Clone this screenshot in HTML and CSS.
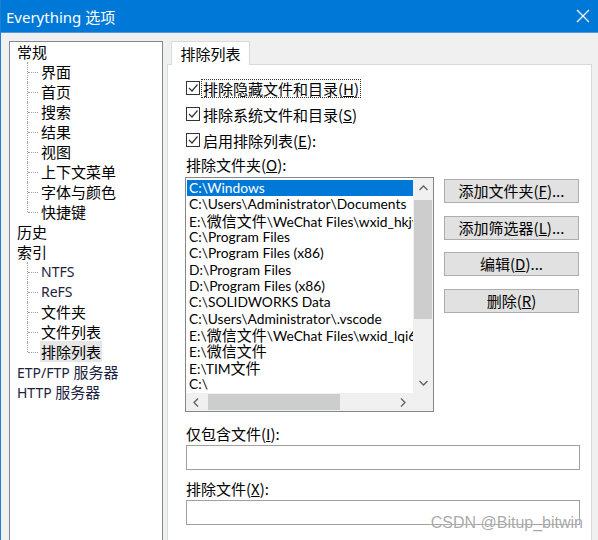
FILE: index.html
```html
<!DOCTYPE html>
<html lang="zh-CN">
<head>
  <meta charset="UTF-8" />
  <title>Everything 选项</title>
  <link rel="stylesheet" href="styles.css">
</head>
<body>
<div class="window">
  <div class="titlebar">
    <span class="title">Everything 选项</span>
    <svg class="close" width="14" height="14" viewBox="0 0 14 14">
      <path d="M1 1 L13 13 M13 1 L1 13" stroke="#fff" stroke-width="1.3" fill="none"/>
    </svg>
  </div>

  <div class="main">
    <div class="tree">
      <div class="row">常规</div>
      <div class="row child">界面</div>
      <div class="row child">首页</div>
      <div class="row child">搜索</div>
      <div class="row child">结果</div>
      <div class="row child">视图</div>
      <div class="row child">上下文菜单</div>
      <div class="row child">字体与颜色</div>
      <div class="row child last">快捷键</div>
      <div class="row">历史</div>
      <div class="row">索引</div>
      <div class="row child latin">NTFS</div>
      <div class="row child latin">ReFS</div>
      <div class="row child">文件夹</div>
      <div class="row child">文件列表</div>
      <div class="row child last"><span class="selected">排除列表</span></div>
      <div class="row latin">ETP/FTP <span class="cjk">服务器</span></div>
      <div class="row latin">HTTP <span class="cjk">服务器</span></div>
    </div>

    <div class="tabs">
      <div class="tab-head">
        <div class="tab">排除列表</div>
      </div>
      <div class="pane">
        <div class="check">
          <span class="box"><svg width="12" height="12" viewBox="0 0 12 12"><path d="M2 6 L5 9 L10.5 2.5" stroke="#333" stroke-width="1.2" fill="none"/></svg></span>
          <span class="check-label focus">排除隐藏文件和目录(<u>H</u>)</span>
        </div>
        <div class="check">
          <span class="box"><svg width="12" height="12" viewBox="0 0 12 12"><path d="M2 6 L5 9 L10.5 2.5" stroke="#333" stroke-width="1.2" fill="none"/></svg></span>
          <span class="check-label">排除系统文件和目录(<u>S</u>)</span>
        </div>
        <div class="check">
          <span class="box"><svg width="12" height="12" viewBox="0 0 12 12"><path d="M2 6 L5 9 L10.5 2.5" stroke="#333" stroke-width="1.2" fill="none"/></svg></span>
          <span class="check-label">启用排除列表(<u>E</u>):</span>
        </div>
        <div class="list-label">排除文件夹(<u>O</u>):</div>

        <div class="list-row">
          <div class="listbox">
            <div class="items">
              <div class="item active">C:\Windows</div>
              <div class="item">C:\Users\Administrator\Documents</div>
              <div class="item">E:\<span class="cjk">微信文件</span>\WeChat Files\wxid_hkjv</div>
              <div class="item">C:\Program Files</div>
              <div class="item">C:\Program Files (x86)</div>
              <div class="item">D:\Program Files</div>
              <div class="item">D:\Program Files (x86)</div>
              <div class="item">C:\SOLIDWORKS Data</div>
              <div class="item">C:\Users\Administrator\.vscode</div>
              <div class="item">E:\<span class="cjk">微信文件</span>\WeChat Files\wxid_lqi6</div>
              <div class="item">E:\<span class="cjk">微信文件</span></div>
              <div class="item">E:\TIM<span class="cjk">文件</span></div>
              <div class="item">C:\</div>
            </div>
            <div class="vscroll">
              <div class="arrow"><svg width="9" height="6" viewBox="0 0 9 6"><path d="M0.5 5 L4.5 1 L8.5 5" stroke="#606060" stroke-width="1.3" fill="none"/></svg></div>
              <div class="track"><div class="thumb-v"></div></div>
              <div class="arrow"><svg width="9" height="6" viewBox="0 0 9 6"><path d="M0.5 1 L4.5 5 L8.5 1" stroke="#606060" stroke-width="1.3" fill="none"/></svg></div>
            </div>
            <div class="hscroll">
              <div class="arrow"><svg width="6" height="9" viewBox="0 0 6 9"><path d="M5 0.5 L1 4.5 L5 8.5" stroke="#606060" stroke-width="1.3" fill="none"/></svg></div>
              <div class="track"><div class="thumb-h"></div></div>
              <div class="arrow"><svg width="6" height="9" viewBox="0 0 6 9"><path d="M1 0.5 L5 4.5 L1 8.5" stroke="#606060" stroke-width="1.3" fill="none"/></svg></div>
            </div>
            <div class="corner"></div>
          </div>

          <div class="buttons">
            <div class="btn">添加文件夹(<u>F</u>)...</div>
            <div class="btn">添加筛选器(<u>L</u>)...</div>
            <div class="btn">编辑(<u>D</u>)...</div>
            <div class="btn">删除(<u>R</u>)</div>
          </div>
        </div>

        <div class="field-label">仅包含文件(<u>I</u>):</div>
        <div class="input"></div>
        <div class="field-label second">排除文件(<u>X</u>):</div>
        <div class="input"></div>
      </div>
    </div>
  </div>

  <div class="watermark">CSDN @Bitup_bitwin</div>
</div>
</body>
</html>
```

FILE: styles.css
```css
body {
  margin: 0;
  font-family: "Noto Sans CJK SC", sans-serif;
  font-size: 15px;
  color: #000;
  background: #f0f0f0;
}
.window {
  position: relative;
  width: 598px;
  height: 540px;
  overflow: hidden;
  box-sizing: border-box;
  border-left: 1px solid #1a7fd6;
  background: #f0f0f0;
}
.titlebar {
  height: 32px;
  background: #0078d7;
  color: #fff;
  display: flex;
  align-items: center;
  justify-content: space-between;
  padding: 0 8px 0 5px;
  border-bottom: 1px solid #4c9be0;
}
.title {
  font-family: "Noto Sans", "Noto Sans CJK SC", sans-serif;
  font-size: 15px;
}
.cjk {
  font-family: "Noto Sans CJK SC", sans-serif;
  font-size: 15px;
}

.main {
  display: flex;
  gap: 4px;
  padding: 8px 0 0 8px;
}
.tree {
  width: 154px;
  height: 520px;
  box-sizing: border-box;
  border: 1px solid #828790;
  background: #fff;
}
.row {
  position: relative;
  height: 20px;
  line-height: 20px;
  padding-left: 7px;
  white-space: nowrap;
}
.row.latin {
  font-family: "Noto Sans", "Noto Sans CJK SC", sans-serif;
  font-size: 14px;
  color: #1c2340;
}
.row.child {
  padding-left: 31px;
}
.row.child::before {
  content: "";
  position: absolute;
  left: 17px;
  top: 0;
  bottom: 0;
  border-left: 1px dotted #a0a0a0;
}
.row.child.last::before {
  bottom: 10px;
}
.row.child::after {
  content: "";
  position: absolute;
  left: 18px;
  top: 10px;
  width: 10px;
  border-top: 1px dotted #a0a0a0;
}
.selected {
  background: #e6e6e6;
  padding: 0 1px;
  margin-left: -1px;
}

.tabs {
  width: 425px;
  display: flex;
  flex-direction: column;
}
.tab-head {
  display: flex;
  padding-left: 4px;
}
.tab {
  position: relative;
  z-index: 1;
  width: 79px;
  height: 24px;
  box-sizing: border-box;
  border: 1px solid #d9d9d9;
  border-bottom: none;
  background: #fff;
  text-align: center;
  line-height: 23px;
  margin-bottom: -1px;
}
.pane {
  height: 500px;
  box-sizing: border-box;
  border: 1px solid #d9d9d9;
  background: #fff;
  padding: 10px 10px 0 17px;
}

.check {
  display: flex;
  align-items: center;
  height: 26px;
}
.box {
  width: 14px;
  height: 14px;
  box-sizing: border-box;
  border: 1px solid #333;
  background: #fff;
  margin: 0 1px 0 1px;
  display: flex;
  align-items: center;
  justify-content: center;
}
.check-label {
  border: 1px dotted transparent;
  padding: 0 1px;
  line-height: 17px;
}
.check-label.focus {
  border-color: #333;
}
.list-label {
  height: 24px;
  line-height: 24px;
  padding-left: 1px;
}

.list-row {
  display: flex;
}
.listbox {
  width: 249px;
  height: 235px;
  box-sizing: border-box;
  border: 1px solid #828790;
  background: #fff;
  display: grid;
  grid-template-columns: 1fr 20px;
  grid-template-rows: 1fr 18px;
  font-family: Lato, "Noto Sans CJK SC", sans-serif;
  font-size: 13.8px;
}
.items {
  overflow: hidden;
  padding: 2px 0 0 1px;
}
.item {
  height: 16.33px;
  line-height: 16.33px;
  padding-left: 2px;
  white-space: nowrap;
  color: #000;
}
.item .cjk {
  line-height: 16px;
}
.item.active {
  background: #0078d7;
  color: #fff;
}
.vscroll, .hscroll {
  background: #f0f0f0;
  display: flex;
}
.vscroll {
  flex-direction: column;
}
.vscroll .arrow {
  height: 20px;
  display: flex;
  align-items: center;
  justify-content: center;
}
.hscroll .arrow {
  width: 20px;
  display: flex;
  align-items: center;
  justify-content: center;
}
.track {
  flex: 1;
  display: flex;
}
.vscroll .track {
  flex-direction: column;
  padding: 2px 1px 0;
}
.hscroll .track {
  padding: 1px 0 1px 2px;
}
.thumb-v {
  height: 119px;
  background: #cdcdcd;
}
.thumb-h {
  width: 132px;
  background: #cdcdcd;
}
.corner {
  background: #f0f0f0;
}

.buttons {
  display: flex;
  flex-direction: column;
  gap: 12.5px;
  padding-top: 2px;
  margin-left: 10px;
}
.btn {
  width: 135px;
  height: 24px;
  box-sizing: border-box;
  border: 1px solid #adadad;
  background: #e1e1e1;
  text-align: center;
  line-height: 22px;
}

.field-label {
  margin-top: 11px;
  height: 22px;
  line-height: 22px;
  padding-left: 1px;
}
.field-label.second {
  margin-top: 8px;
}
.input {
  width: 394px;
  height: 25px;
  box-sizing: border-box;
  margin-left: 1px;
  border: 1px solid #a0a0a0;
  background: #fff;
}

.watermark {
  position: absolute;
  right: 15px;
  bottom: 8px;
  font-family: "Liberation Sans", Arial, sans-serif;
  font-size: 16px;
  color: rgba(140, 140, 140, 0.75);
  text-shadow: 0 0 2px #fff;
}
```
